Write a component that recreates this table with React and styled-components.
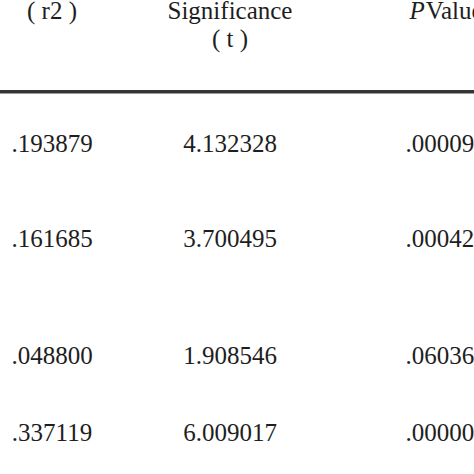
import React from "react";
import styled, { createGlobalStyle } from "styled-components";

const GlobalStyle = createGlobalStyle`
  html, body {
    margin: 0;
    padding: 0;
    background: #ffffff;
    overflow: hidden;
  }
  body {
    width: 474px;
    height: 474px;
  }
`;

const Page = styled.div`
  width: 474px;
  height: 474px;
  overflow: hidden;
  background: #fff;
  font-family: "Liberation Serif", "Times New Roman", serif;
  font-size: 25px;
  line-height: 28px;
  color: #1e1e1e;
`;

const Row = styled.div`
  display: grid;
  grid-template-columns: 104px 252px 180px;
  width: 536px;
  padding-bottom: ${(p) => p.$bottom || 0}px;
`;

const HeadRow = styled(Row)`
  margin-top: -3px;
`;

const Cell = styled.div`
  text-align: center;
  white-space: nowrap;
`;

const Ital = styled.i`
  font-style: italic;
  margin-right: 1px;
`;

const Rule = styled.div`
  height: 3px;
  margin-bottom: 37px;
  background: #353535;
  box-shadow: 0 1px 0 #9a9a9a;
`;

const rows = [
  { r2: ".193879", t: "4.132328", p: ".000098", gap: 67 },
  { r2: ".161685", t: "3.700495", p: ".000426", gap: 89 },
  { r2: ".048800", t: "1.908546", p: ".060364", gap: 49 },
  { r2: ".337119", t: "6.009017", p: ".000000", gap: 40 },
];

export default function App() {
  return (
    <>
      <GlobalStyle />
      <Page>
        <HeadRow $bottom={37}>
          <Cell>( r2 )</Cell>
          <Cell>
            Significance
            <br />( t )
          </Cell>
          <Cell>
            <Ital>P</Ital>Value
          </Cell>
        </HeadRow>
        <Rule />
        {rows.map((r) => (
          <Row key={r.r2} $bottom={r.gap}>
            <Cell>{r.r2}</Cell>
            <Cell>{r.t}</Cell>
            <Cell>{r.p}</Cell>
          </Row>
        ))}
      </Page>
    </>
  );
}
